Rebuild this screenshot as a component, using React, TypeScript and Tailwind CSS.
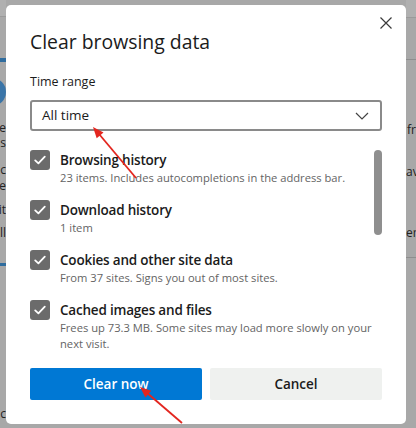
import React from "react";

const Check = () => (
  <svg width="14" height="14" viewBox="0 0 14 14" fill="none">
    <path d="M2.2 7.4 L5.4 10.4 L11.8 3.6" stroke="#ffffff" strokeWidth="1.8" strokeLinecap="round" strokeLinejoin="round" />
  </svg>
);

const Item = ({ label, desc }: { label: string; desc: React.ReactNode }) => (
  <div className="flex gap-[10px]">
    <div className="w-5 h-5 shrink-0 rounded-[3px] bg-[#6b6b6b] flex items-center justify-center">
      <Check />
    </div>
    <div className="flex flex-col">
      <div className="text-[13.5px] leading-[20px] tracking-[-0.2px] font-semibold text-[#1b1b1b]">{label}</div>
      <div className="text-[11.2px] leading-[16px] text-[#646464]">{desc}</div>
    </div>
  </div>
);

export default function App() {
  return (
    <div
      className="relative w-[416px] h-[428px] overflow-hidden bg-[#a8a8a8] flex"
      style={{ fontFamily: '"Open Sans", "Noto Sans", sans-serif' }}
    >
      {/* left strip of dimmed page */}
      <div className="w-[6px] shrink-0 flex flex-col items-end overflow-hidden text-[12px] leading-[13px] text-[#222]">
        <div className="w-full h-[17px] shrink-0 bg-[#b0b0b0] border-b border-[#9a9a9a]"></div>
        <div className="w-full h-[4px] mt-[41px] shrink-0 bg-[#2f6c9e]"></div>
        <div className="w-[28px] h-[28px] mt-[16px] shrink-0 rounded-full bg-[#3a75a8] flex items-center justify-start pl-[4px]">
          <div className="w-[10px] h-[10px] border-2 border-white rounded-[2px]"></div>
        </div>
        <div className="mt-[15px] whitespace-nowrap">Tile</div>
        <div className="mt-[2px] whitespace-nowrap">this</div>
        <div className="mt-[14px] whitespace-nowrap">abc</div>
        <div className="mt-[3px] whitespace-nowrap">the</div>
        <div className="mt-[11px] whitespace-nowrap">wit</div>
        <div className="mt-[10px] whitespace-nowrap">all</div>
        <div className="w-full h-[3px] mt-[24px] shrink-0 bg-[#2f6c9e]"></div>
        <div className="mt-[141px] whitespace-nowrap">ac</div>
      </div>

      {/* dialog */}
      <div className="relative w-[400px] h-[419px] mt-[5px] shrink-0 bg-white rounded-[5px] px-6 flex flex-col">
        <button className="absolute left-[373px] top-[11px] w-[14px] h-[14px] flex items-center justify-center">
          <svg width="14" height="14" viewBox="0 0 14 14" fill="none">
            <path d="M1.5 1.5 L12.5 12.5 M12.5 1.5 L1.5 12.5" stroke="#3a3a3a" strokeWidth="1.2" />
          </svg>
        </button>
        <h1 className="mt-[23px] text-[19.4px] leading-[28px] text-[#1b1b1b] font-normal">Clear browsing data</h1>
        <div className="mt-[17px] text-[12.5px] leading-[18px] text-[#1b1b1b]">Time range</div>
        <div className="mt-[9px] h-[31px] border-2 border-[#8a8a8a] rounded-[3px] pl-[10px] pr-[11px] flex items-center justify-between">
          <span className="text-[13.5px] text-[#1b1b1b]">All time</span>
          <svg width="14" height="8" viewBox="0 0 14 8" fill="none">
            <path d="M1 1 L7 7 L13 1" stroke="#444" strokeWidth="1.2" />
          </svg>
        </div>
        <div className="relative mt-[19px] flex flex-col gap-[14px]">
          <Item label="Browsing history" desc="23 items. Includes autocompletions in the address bar." />
          <Item label="Download history" desc="1 item" />
          <Item label="Cookies and other site data" desc="From 37 sites. Signs you out of most sites." />
          <Item label="Cached images and files" desc={<>Frees up 73.3 MB. Some sites may load more slowly on your<br />next visit.</>} />
          <div className="absolute right-0 top-0 w-2 h-[85px] rounded-full bg-[#8f8f8f]"></div>
        </div>
        <div className="mt-[16px] grid grid-cols-2 gap-2">
          <button className="h-8 rounded-[2px] bg-[#0078d4] text-white text-[13.5px] font-semibold">Clear now</button>
          <button className="h-8 rounded-[2px] bg-[#eff1ef] text-[#1b1b1b] text-[13.5px] font-semibold">Cancel</button>
        </div>
      </div>

      {/* right strip */}
      <div className="w-[10px] shrink-0 flex flex-col overflow-hidden text-[12px] leading-[14px] text-[#222]">
        <div className="w-full h-[18px] shrink-0 bg-[#b0b0b0] border-b border-[#9a9a9a]"></div>
        <div className="w-full h-[42px] shrink-0 border-b border-[#8e8e8e]"></div>
        <div className="mt-[63px] pl-[1px] whitespace-nowrap">from</div>
        <div className="mt-[28px] whitespace-nowrap">ave</div>
        <div className="mt-[47px] whitespace-nowrap">ers</div>
        <div className="w-full h-[1px] mt-[17px] shrink-0 bg-[#8e8e8e]"></div>
      </div>

      {/* annotation arrows */}
      <svg className="absolute inset-0 pointer-events-none" width="416" height="428" viewBox="0 0 416 428">
        <line x1="136" y1="178" x2="99" y2="134" stroke="#e3261f" strokeWidth="1.8" />
        <polygon points="93,127 103.5,132.5 96.7,138.3" fill="#e3261f" />
        <line x1="182" y1="423" x2="146" y2="392" stroke="#e3261f" strokeWidth="1.8" />
        <polygon points="140,387 151.2,390.8 145.4,397.6" fill="#e3261f" />
      </svg>
    </div>
  );
}
